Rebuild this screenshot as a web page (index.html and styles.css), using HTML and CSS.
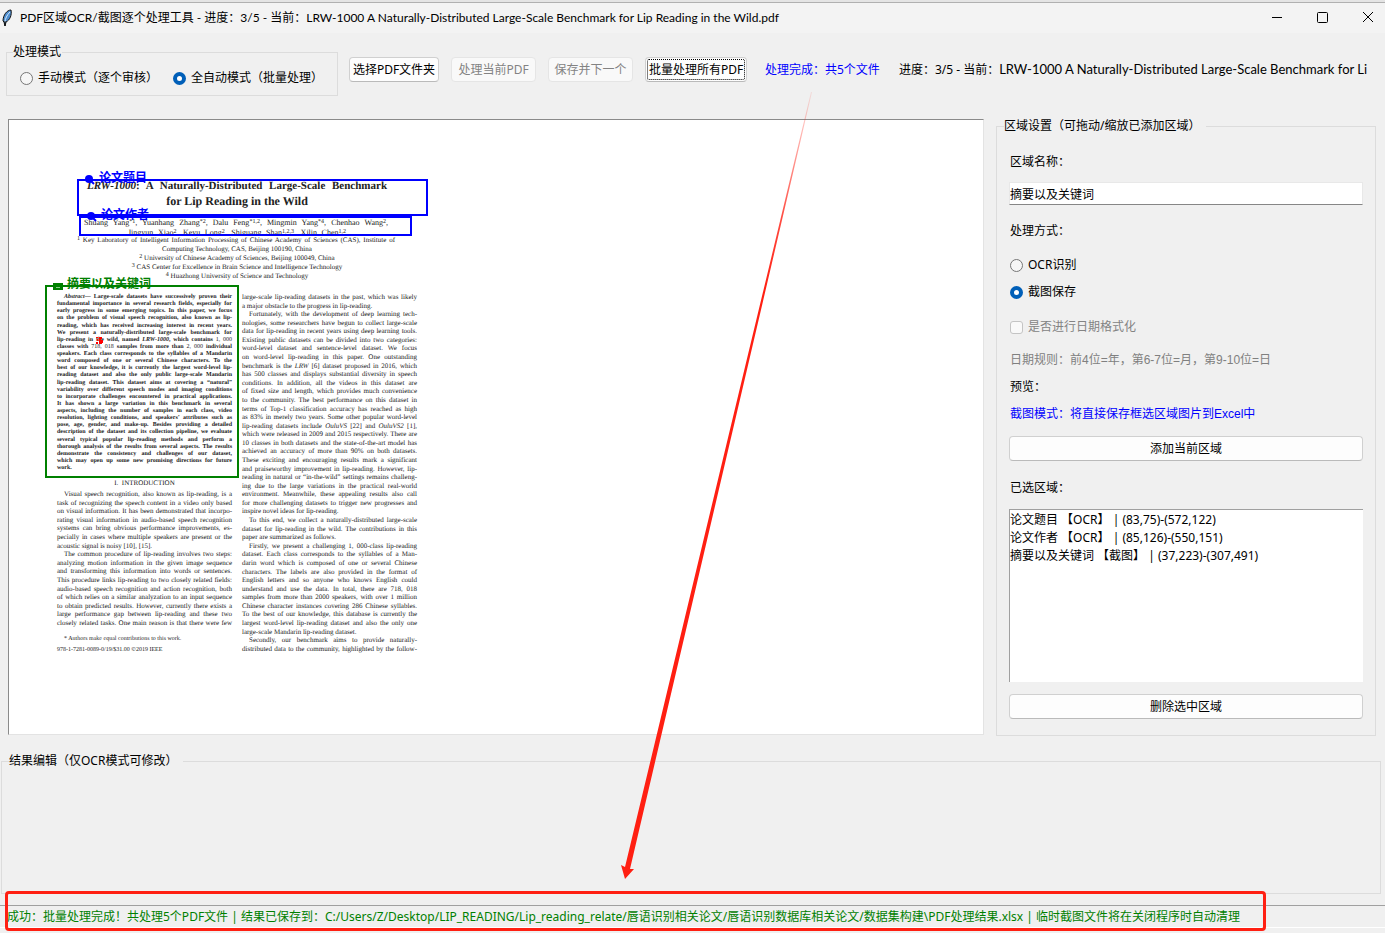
FILE: index.html
```html
<!DOCTYPE html>
<html lang="zh-CN">
<head>
<meta charset="utf-8">
<title>PDF区域OCR/截图逐个处理工具</title>
<link rel="stylesheet" href="styles.css">
</head>
<body>
<div class="backdrop"></div>
<header class="titlebar">
  <svg class="feather" width="12" height="18" viewBox="0 0 12 18"><path d="M10 1C6 1 2 6 2 12l1 1 1 4 1-4c4-2 6-7 5-12z" fill="#4f8fd0" stroke="#111" stroke-width="1"/><path d="M9 3C6 6 4 10 4 13" fill="none" stroke="#d5e8fa" stroke-width="1"/><path d="M4 12v5" stroke="#111" stroke-width="1"/></svg>
  <h1 class="title">PDF区域OCR/截图逐个处理工具 - 进度：3/5 - 当前：LRW-1000 A Naturally-Distributed Large-Scale Benchmark for Lip Reading in the Wild.pdf</h1>
  <div class="controls">
    <button class="control" aria-label="最小化"><svg width="12" height="12" viewBox="0 0 12 12"><path d="M0 5.500h10"/></svg></button>
    <button class="control" aria-label="最大化"><svg width="12" height="12" viewBox="0 0 12 12"><rect x="0.500" y="0.500" width="10" height="10" rx="1"/></svg></button>
    <button class="control" aria-label="关闭"><svg width="12" height="12" viewBox="0 0 12 12"><path d="M1 0l10 10M11 0L1 10"/></svg></button>
  </div>
</header>

<div class="toolbar">
  <fieldset class="group mode">
    <legend>处理模式</legend>
    <label class="choice"><input type="radio" name="mode">手动模式（逐个审核）</label>
    <label class="choice"><input type="radio" name="mode" checked>全自动模式（批量处理）</label>
  </fieldset>
  <div class="actions">
    <button class="btn">选择PDF文件夹</button>
    <button class="btn" disabled>处理当前PDF</button>
    <button class="btn" disabled>保存并下一个</button>
    <button class="btn focused">批量处理所有PDF</button>
  </div>
  <span class="done">处理完成：共5个文件</span>
  <span class="progress">进度：3/5 - 当前：<span class="filename">LRW-1000 A Naturally-Distributed Large-Scale Benchmark for Li</span></span>
</div>

<main class="workspace">
  <section class="canvas">
    <article class="paper">
      <h2 class="paper-title"><span class="wide"><i>LRW-1000</i>: A Naturally-Distributed Large-Scale Benchmark</span><span>for Lip Reading in the Wild</span></h2>
      <div class="authors"><p class="first">Shuang Yang<sup>*1</sup>, Yuanhang Zhang<sup>*2</sup>, Dalu Feng<sup>*1,2</sup>, Mingmin Yang<sup>*4</sup>, Chenhao Wang<sup>2</sup>,</p><p class="second">Jingyun Xiao<sup>2</sup>, Keyu Long<sup>2</sup>, Shiguang Shan<sup>1,2,3</sup>, Xilin Chen<sup>1,2</sup></p></div>
      <div class="affiliations">
        <p class="full"><sup>1</sup> Key Laboratory of Intelligent Information Processing of Chinese Academy of Sciences (CAS), Institute of</p>
        <p>Computing Technology, CAS, Beijing 100190, China</p>
        <p><sup>2</sup> University of Chinese Academy of Sciences, Beijing 100049, China</p>
        <p><sup>3</sup> CAS Center for Excellence in Brain Science and Intelligence Technology</p>
        <p><sup>4</sup> Huazhong University of Science and Technology</p>
      </div>
      <div class="columns">
        <div class="column left">
          <div class="lines abstract">
            <p class="in"><i>Abstract</i>— Large-scale datasets have successively proven their</p>
            <p>fundamental importance in several research fields, especially for</p>
            <p>early progress in some emerging topics. In this paper, we focus</p>
            <p>on the problem of visual speech recognition, also known as lip-</p>
            <p>reading, which has received increasing interest in recent years.</p>
            <p>We present a naturally-distributed large-scale benchmark for</p>
            <p>lip-reading in the wild, named <i>LRW-1000</i>, which contains <span class="num">1, 000</span></p>
            <p>classes with <span class="num">718, 018</span> samples from more than <span class="num">2, 000</span> individual</p>
            <p>speakers. Each class corresponds to the syllables of a Mandarin</p>
            <p>word composed of one or several Chinese characters. To the</p>
            <p>best of our knowledge, it is currently the largest word-level lip-</p>
            <p>reading dataset and also the only public large-scale Mandarin</p>
            <p>lip-reading dataset. This dataset aims at covering a “natural”</p>
            <p>variability over different speech modes and imaging conditions</p>
            <p>to incorporate challenges encountered in practical applications.</p>
            <p>It has shown a large variation in this benchmark in several</p>
            <p>aspects, including the number of samples in each class, video</p>
            <p>resolution, lighting conditions, and speakers’ attributes such as</p>
            <p>pose, age, gender, and make-up. Besides providing a detailed</p>
            <p>description of the dataset and its collection pipeline, we evaluate</p>
            <p>several typical popular lip-reading methods and perform a</p>
            <p>thorough analysis of the results from several aspects. The results</p>
            <p>demonstrate the consistency and challenges of our dataset,</p>
            <p>which may open up some new promising directions for future</p>
            <p class="end">work.</p>
          </div>
          <h3 class="heading">I. &nbsp;INTRODUCTION</h3>
          <div class="lines intro">
            <p class="in">Visual speech recognition, also known as lip-reading, is a</p>
            <p>task of recognizing the speech content in a video only based</p>
            <p>on visual information. It has been demonstrated that incorpo-</p>
            <p>rating visual information in audio-based speech recognition</p>
            <p>systems can bring obvious performance improvements, es-</p>
            <p>pecially in cases where multiple speakers are present or the</p>
            <p class="end">acoustic signal is noisy [10], [15].</p>
            <p class="in">The common procedure of lip-reading involves two steps:</p>
            <p>analyzing motion information in the given image sequence</p>
            <p>and transforming this information into words or sentences.</p>
            <p>This procedure links lip-reading to two closely related fields:</p>
            <p>audio-based speech recognition and action recognition, both</p>
            <p>of which relies on a similar analyzation to an input sequence</p>
            <p>to obtain predicted results. However, currently there exists a</p>
            <p>large performance gap between lip-reading and these two</p>
            <p>closely related tasks. One main reason is that there were few</p>
          </div>
          <div class="notes"><p class="in">* Authors make equal contributions to this work.</p><p>978-1-7281-0089-0/19/$31.00 ©2019 IEEE</p></div>
        </div>
        <div class="column">
          <div class="lines second-column">
            <p>large-scale lip-reading datasets in the past, which was likely</p>
            <p class="end">a major obstacle to the progress in lip-reading.</p>
            <p class="in">Fortunately, with the development of deep learning tech-</p>
            <p>nologies, some researchers have begun to collect large-scale</p>
            <p>data for lip-reading in recent years using deep learning tools.</p>
            <p>Existing public datasets can be divided into two categories:</p>
            <p>word-level dataset and sentence-level dataset. We focus</p>
            <p>on word-level lip-reading in this paper. One outstanding</p>
            <p>benchmark is the <i>LRW</i> [6] dataset proposed in 2016, which</p>
            <p>has 500 classes and displays substantial diversity in speech</p>
            <p>conditions. In addition, all the videos in this dataset are</p>
            <p>of fixed size and length, which provides much convenience</p>
            <p>to the community. The best performance on this dataset in</p>
            <p>terms of Top-1 classification accuracy has reached as high</p>
            <p>as 83% in merely two years. Some other popular word-level</p>
            <p>lip-reading datasets include <i>OuluVS</i> [22] and <i>OuluVS2</i> [1],</p>
            <p>which were released in 2009 and 2015 respectively. There are</p>
            <p>10 classes in both datasets and the state-of-the-art model has</p>
            <p>achieved an accuracy of more than 90% on both datasets.</p>
            <p>These exciting and encouraging results mark a significant</p>
            <p>and praiseworthy improvement in lip-reading. However, lip-</p>
            <p>reading in natural or “in-the-wild” settings remains challeng-</p>
            <p>ing due to the large variations in the practical real-world</p>
            <p>environment. Meanwhile, these appealing results also call</p>
            <p>for more challenging datasets to trigger new progresses and</p>
            <p class="end">inspire novel ideas for lip-reading.</p>
            <p class="in">To this end, we collect a naturally-distributed large-scale</p>
            <p>dataset for lip-reading in the wild. The contributions in this</p>
            <p class="end">paper are summarized as follows.</p>
            <p class="in">Firstly, we present a challenging 1, 000-class lip-reading</p>
            <p>dataset. Each class corresponds to the syllables of a Man-</p>
            <p>darin word which is composed of one or several Chinese</p>
            <p>characters. The labels are also provided in the format of</p>
            <p>English letters and so anyone who knows English could</p>
            <p>understand and use the data. In total, there are 718, 018</p>
            <p>samples from more than 2000 speakers, with over 1 million</p>
            <p>Chinese character instances covering 286 Chinese syllables.</p>
            <p>To the best of our knowledge, this database is currently the</p>
            <p>largest word-level lip-reading dataset and also the only one</p>
            <p class="end">large-scale Mandarin lip-reading dataset.</p>
            <p class="in">Secondly, our benchmark aims to provide naturally-</p>
            <p>distributed data to the community, highlighted by the follow-</p>
          </div>
        </div>
      </div>
    </article>
    <div class="region region-title"><span class="tag"><svg width="12" height="10" viewBox="0 0 12 10"><circle cx="5" cy="4" r="4" fill="currentColor"/><path d="M7 6l3 3" stroke="currentColor" stroke-width="2"/></svg>论文题目</span></div>
    <div class="region region-authors"><span class="tag"><svg width="12" height="10" viewBox="0 0 12 10"><circle cx="5" cy="4" r="4" fill="currentColor"/><path d="M7 6l3 3" stroke="currentColor" stroke-width="2"/></svg>论文作者</span></div>
    <div class="region region-abstract"><span class="tag"><svg width="12" height="10" viewBox="0 0 12 10"><path d="M1 2h10v7H1z" fill="currentColor"/><path d="M4 6.500h4" stroke="#8c8"/></svg>摘要以及关键词</span></div>
    <svg class="marker" width="8" height="7" viewBox="0 0 8 7"><path d="M0 0h2v1H0zM0 5h2v2H0zM1 2h1v2H1zM3 0h3v2H5v1h2v3H6v1H3z" fill="#f00"/></svg>
  </section>

  <fieldset class="group settings">
    <legend>区域设置（可拖动/缩放已添加区域）</legend>
    <label for="region-name" class="text">区域名称：</label>
    <input class="field" id="region-name" type="text" value="摘要以及关键词">
    <span class="text">处理方式：</span>
    <label class="choice text ocr"><input type="radio" name="method">OCR识别</label>
    <label class="choice text shot"><input type="radio" name="method" checked>截图保存</label>
    <label class="choice text date"><input type="checkbox" disabled>是否进行日期格式化</label>
    <span class="text rule">日期规则：前4位=年，第6-7位=月，第9-10位=日</span>
    <span class="text preview">预览：</span>
    <span class="text hint">截图模式：将直接保存框选区域图片到Excel中</span>
    <button class="btn add">添加当前区域</button>
    <label class="text list-label" for="regions">已选区域：</label>
    <select class="list" id="regions" size="9">
      <option>论文题目 【OCR】 | (83,75)-(572,122)</option>
      <option>论文作者 【OCR】 | (85,126)-(550,151)</option>
      <option>摘要以及关键词 【截图】 | (37,223)-(307,491)</option>
    </select>
    <button class="btn remove">删除选中区域</button>
  </fieldset>
</main>

<fieldset class="group results">
  <legend>结果编辑（仅OCR模式可修改）</legend>
</fieldset>

<footer class="status"><p>成功：批量处理完成！共处理5个PDF文件 | 结果已保存到：C:/Users/Z/Desktop/LIP_READING/Lip_reading_relate/唇语识别相关论文/唇语识别数据库相关论文/数据集构建\PDF处理结果.xlsx | 临时截图文件将在关闭程序时自动清理</p></footer>
<div class="highlight"></div>
<svg class="arrow" width="194" height="790" viewBox="0 0 194 790">
  <defs><linearGradient id="fade" x1="0" y1="0" x2="0" y2="1"><stop offset="0" stop-color="#ff1f12" stop-opacity="0.1"/><stop offset="0.16" stop-color="#ff1f12" stop-opacity="0.8"/><stop offset="0.25" stop-color="#ff1f12"/></linearGradient></defs>
  <path d="M190 0L191 0L9 777L13 777L4 787L0 773L4 775Z" fill="url(#fade)"/>
</svg>
</body>
</html>
```
FILE: styles.css
```css
* { box-sizing: border-box; }
body {
  margin: 0;
  min-height: 100vh;
  display: flex;
  flex-direction: column;
  position: relative;
  overflow-x: hidden;
  background: #f0f0f0;
  color: #000;
  font: 12px/18px "Noto Sans", "Noto Sans CJK SC", sans-serif;
}
p, h1, h2, h3 { margin: 0; font-size: inherit; font-weight: inherit; }
button, input, select { font: inherit; color: inherit; margin: 0; }

.backdrop { height: 3px; background: #e4e4e4; border-bottom: 1px solid #b0b0b0; }
.titlebar {
  height: 30px;
  display: flex;
  align-items: center;
  gap: 7px;
  padding-left: 1px;
  background: #f3f3f3;
}
.title { flex: 1; min-width: 0; white-space: nowrap; overflow: hidden; font-weight: normal; font-family: Lato, "Noto Sans CJK SC", sans-serif; }
.controls { display: flex; gap: 11px; }
.control {
  width: 34px;
  height: 30px;
  padding: 0;
  border: 0;
  background: none;
  display: grid;
  place-items: center;
}
.control svg { fill: none; stroke: #000; }

.group { margin: 0; min-width: 0; border: 1px solid #dcdcdc; }
.group legend { padding: 0 6px 0 0; }

.toolbar { display: flex; align-items: flex-start; padding: 10px 10px 0 6px; white-space: nowrap; }
.mode { flex: none; width: 332px; height: 53px; display: flex; gap: 15px; padding: 8px 12px 0 13px; }
.mode legend { margin-left: -7px; padding-right: 1px; }
.choice { display: flex; align-items: center; gap: 5px; }
.mode .choice { height: 18px; }
.choice input {
  appearance: none;
  flex: none;
  width: 13px;
  height: 13px;
  border: 1px solid #767676;
  border-radius: 50%;
  background: #f6f6f6;
}
.choice input:checked { border: 4px solid #005fb8; background: #fff; }
.choice input[type="checkbox"] { border-color: #c4c4c4; border-radius: 3px; background: #f9f9f9; }

.actions { display: flex; gap: 12px; margin: 14px 0 0 11px; }
.btn {
  height: 25px;
  padding: 0 2px;
  border: 1px solid #d0d0d0;
  border-bottom-color: #bababa;
  border-radius: 4px;
  background: #fdfdfd;
  line-height: 18px;
}
.actions .btn { min-width: 85px; }
.actions .btn:first-child { min-width: 90px; }
.actions .btn:last-child { min-width: 102px; }
.btn:disabled { color: #838383; border-color: #e5e5e5; background: #f9f9f9; }
.btn.focused { outline: 1px dotted #000; outline-offset: -3px; }
.done { margin: 18px 0 0 18px; color: #00f; }
.progress { margin: 18px 0 0 19px; min-width: 0; overflow: hidden; }
.filename { font-family: Lato, sans-serif; font-size: 13px; line-height: 1; }

.workspace { flex: 1; display: grid; grid-template-columns: minmax(0, 1fr) 380px; gap: 12px; padding: 21px 9px 0 8px; }
.canvas {
  position: relative;
  margin-top: 2px;
  margin-bottom: 1px;
  overflow: hidden;
  background: #fff;
  border: 1px solid #e3e3e3;
  border-top-color: #8a8a8a;
  border-left-color: #8a8a8a;
}

.paper {
  width: 360px;
  margin: 59px 0 0 48px;
  color: #222;
  font: 7px/9px "Liberation Serif", serif;
  text-rendering: geometricPrecision;
  white-space: nowrap;
}
.paper sup { font-size: 6px; line-height: 1px; vertical-align: 2px; }
.paper-title { font-size: 12px; line-height: 15px; font-weight: bold; text-align: center; }
.paper-title span { display: block; }
.paper-title .wide { width: 300px; margin: 0 auto; font-size: 11px; text-align-last: justify; }
.authors { margin-top: 9px; height: 18px; overflow: hidden; font-size: 8px; line-height: 10px; text-align-last: justify; }
.authors .first { margin: 0 29px 0 27px; }
.authors .second { margin: 0 71px; }
.affiliations { text-align: center; }
.affiliations .full { margin: 0 22px 0 20px; text-align-last: justify; }
.columns { display: flex; gap: 10px; margin-top: 12px; }
.column { flex: 1; min-width: 0; }
.left { padding-top: 1px; }
.lines { display: flex; flex-direction: column; justify-content: space-between; line-height: 8px; text-align-last: justify; }
.lines .in { padding-left: 7px; }
.lines .end { text-align-last: left; }
.abstract { height: 178px; font-size: 6px; line-height: 7px; font-weight: bold; }
.abstract .num { font-weight: normal; }
.heading { margin: 7px 0 2px; text-align: center; }
.intro { height: 137px; }
.second-column { height: 360px; }
.notes { margin-top: 7px; font-size: 6px; line-height: 11px; }
.notes .in { padding-left: 7px; }

.region { position: absolute; border: 2px solid #00f; color: #00f; }
.region-title { left: 68px; top: 59px; width: 351px; height: 37px; }
.region-authors { left: 70px; top: 96px; width: 333px; height: 20px; }
.region-abstract { left: 36px; top: 165px; width: 194px; height: 193px; border-color: #008000; color: #008000; }
.tag { position: absolute; left: 5px; top: -12px; display: flex; align-items: center; gap: 3px; white-space: nowrap; font-weight: bold; line-height: 18px; }
.tag svg { margin-top: 3px; }
.marker { position: absolute; left: 87px; top: 217px; }

.settings { display: flex; flex-direction: column; padding: 18px 12px 16px; }
.settings legend { margin-left: -5px; }
.text { padding-left: 1px; }
.field {
  height: 23px;
  margin: 11px 0 17px;
  padding: 0;
  border: 1px solid #e8e8e8;
  border-bottom-color: #868686;
  background: #fff;
}
.ocr { margin-top: 16px; }
.shot { margin-top: 9px; }
.date { margin-top: 17px; color: #838383; }
.rule { margin-top: 15px; color: #808080; font-family: "Liberation Sans", "Noto Sans CJK SC", sans-serif; }
.preview { margin-top: 9px; }
.hint { margin-top: 9px; color: #00f; font-family: "Liberation Sans", "Noto Sans CJK SC", sans-serif; }
.add { margin-top: 13px; }
.list-label { margin-top: 18px; }
.list {
  flex: 1;
  min-height: 90px;
  margin: 12px 0 12px;
  padding: 0;
  border: 0 solid #a0a0a0;
  border-width: 1px 0 0 1px;
  border-radius: 0;
  background: #fff;
  overflow: hidden;
}
.list option { padding: 0; min-height: 18px; line-height: 18px; }

.results { height: 142px; margin: 16px 4px 0 1px; padding: 0 7px; }
.status { margin-top: 11px; height: 28px; border-top: 1px solid #a0a0a0; }
.status p { height: 22px; padding: 2px 0 0 7px; border-bottom: 1px solid #fff; color: #008000; white-space: nowrap; }
.highlight { position: absolute; left: 5px; bottom: 2px; width: 1261px; height: 40px; border: 3px solid #ff1f12; border-radius: 4px; }
.arrow { position: absolute; left: 621px; top: 92px; }
```
